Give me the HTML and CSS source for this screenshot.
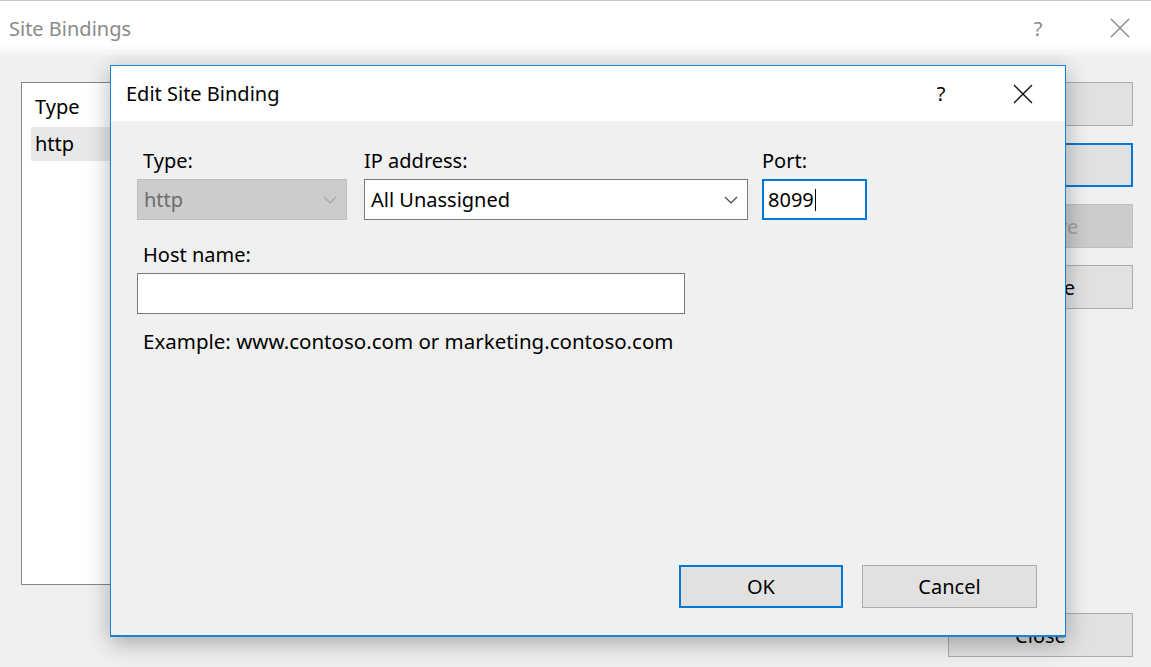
FILE: index.html
```html
<!doctype html>
<html>
<head>
    <title>Site Bindings</title>
    <meta charset="utf-8"/>
    <link rel="stylesheet" href="styles.css">
</head>
<body>

    <div class="window">
        <div class="titlebar faded">
            <span class="title">Site Bindings</span>
            <span class="help">?</span>
            <span class="close">
                <svg width="20" height="20" viewBox="0 0 20 20"><path d="M1 1 L19 19 M19 1 L1 19" stroke="#888" stroke-width="1.4" fill="none"/></svg>
            </span>
        </div>
        <div class="winBody">
            <div class="listBox">
                <div class="listHead">Type</div>
                <div class="listRow">http</div>
            </div>
            <div class="sideButtons">
                <div class="btn">Add...</div>
                <div class="btn focused">Edit...</div>
                <div class="btn disabled">Remove</div>
                <div class="btn">Browse</div>
                <div class="btn closeBtn">Close</div>
            </div>
        </div>
    </div>

    <div class="dialog">
        <div class="titlebar">
            <span class="title">Edit Site Binding</span>
            <span class="help">?</span>
            <span class="close">
                <svg width="20" height="20" viewBox="0 0 20 20"><path d="M1 1 L19 19 M19 1 L1 19" stroke="#111" stroke-width="1.4" fill="none"/></svg>
            </span>
        </div>
        <div class="dlgBody">
            <div class="fieldRow">
                <div class="field typeField">
                    <label class="indent">Type:</label>
                    <div class="combo disabled">
                        <span>http</span>
                        <svg width="14" height="8" viewBox="0 0 14 8"><polyline points="1,1 7,7 13,1" stroke="#a6a6a6" stroke-width="1.2" fill="none"/></svg>
                    </div>
                </div>
                <div class="field ipField">
                    <label>IP address:</label>
                    <div class="combo">
                        <span>All Unassigned</span>
                        <svg width="14" height="8" viewBox="0 0 14 8"><polyline points="1,1 7,7 13,1" stroke="#444" stroke-width="1.2" fill="none"/></svg>
                    </div>
                </div>
                <div class="field portField">
                    <label>Port:</label>
                    <div class="textbox active">8099<span class="caret"></span></div>
                </div>
            </div>

            <div class="field hostField">
                <label class="indent">Host name:</label>
                <div class="textbox"></div>
            </div>
            <p class="hint">Example: www.contoso.com or marketing.contoso.com</p>

            <div class="dlgButtons">
                <div class="btn focused okBtn">OK</div>
                <div class="btn cancelBtn">Cancel</div>
            </div>
        </div>
    </div>

</body>
</html>
```

FILE: styles.css
```css
* {
    margin: 0;
    box-sizing: border-box;
    font-family: "Noto Sans", "Open Sans", sans-serif;
}

body {
    width: 1151px;
    height: 667px;
    overflow: hidden;
    position: relative;
    background-color: #f0f0f0;
    font-size: 20px;
    color: #000;
}

.window {
    height: 667px;
    border-top: 1px solid #c8c8c8;
}

.titlebar {
    height: 54px;
    background-color: #fff;
    display: flex;
    align-items: center;
    padding-left: 9px;
    font-size: 20px;
}

.titlebar .title {
    flex: 1;
}

.titlebar .help {
    width: 82px;
    text-align: center;
}

.titlebar .close {
    width: 82px;
    display: flex;
    justify-content: center;
    align-items: center;
}

.faded {
    color: #8a8a8a;
    background: linear-gradient(#fff 80%, #f4f4f4);
}

.faded .help {
    margin-right: 10px;
}

.faded .close {
    width: 62px;
}

.winBody {
    display: flex;
    padding: 27px 18px 0 21px;
    gap: 18px;
}

.listBox {
    flex: 1;
    height: 503px;
    background-color: #fff;
    border: 1px solid #828790;
    padding: 6px 9px;
}

.listHead {
    padding: 0 4px;
    height: 38px;
    line-height: 36px;
}

.listRow {
    background-color: #e8e8e8;
    padding: 0 4px;
    height: 34px;
    line-height: 34px;
}

.sideButtons {
    width: 185px;
    height: 575px;
    display: flex;
    flex-direction: column;
    gap: 17px;
}

.btn {
    height: 44px;
    background-color: #e1e1e1;
    border: 1px solid #adadad;
    display: flex;
    align-items: center;
    justify-content: center;
}

.btn.focused {
    border: 2px solid #0078d7;
}

.btn.disabled {
    background-color: #cccccc;
    border-color: #bfbfbf;
    color: #a0a0a0;
}

.closeBtn {
    margin-top: auto;
}

.dialog {
    position: absolute;
    left: 110px;
    top: 65px;
    width: 956px;
    height: 572px;
    background-color: #f0f0f0;
    border: 1px solid #1883d7;
    border-bottom-width: 2px;
    box-shadow: 0 6px 22px rgba(0, 0, 0, 0.3);
}

.dialog .titlebar {
    height: 55px;
    padding-left: 15px;
}

.dialog .help {
    margin-left: auto;
}

.dialog .close {
    margin-right: 1px;
}

.dlgBody {
    padding: 26px 26px 0 26px;
    height: 514px;
    position: relative;
    display: flex;
    flex-direction: column;
}

.fieldRow {
    display: flex;
}

.field label {
    display: block;
    height: 32px;
    line-height: 28px;
}

.field label.indent {
    padding-left: 6px;
}

.typeField {
    width: 210px;
    margin-right: 17px;
}

.ipField {
    width: 384px;
    margin-right: 14px;
}

.portField {
    width: 105px;
}

.combo {
    height: 41px;
    display: flex;
    align-items: center;
    justify-content: space-between;
    padding: 0 9px 0 6px;
    background-color: #fff;
    border: 1px solid #7a7a7a;
}

.combo.disabled {
    background-color: #cccccc;
    border-color: #bfbfbf;
    color: #6d6d6d;
}

.textbox {
    height: 41px;
    background-color: #fff;
    border: 1px solid #7a7a7a;
    padding: 0 5px;
    display: flex;
    align-items: center;
}

.textbox.active {
    border: 2px solid #0078d7;
    padding: 0 4px;
}

.caret {
    display: inline-block;
    width: 1px;
    height: 22px;
    background-color: #000;
    margin-left: 1px;
}

.hostField {
    width: 548px;
    margin-top: 21px;
}

.hint {
    margin-top: 13px;
    padding-left: 6px;
    font-size: 20.5px;
}

.dlgButtons {
    margin-top: auto;
    margin-bottom: 27px;
    display: flex;
    justify-content: flex-end;
    gap: 19px;
    padding-right: 2px;
}

.okBtn {
    width: 164px;
    height: 43px;
}

.cancelBtn {
    width: 175px;
    height: 43px;
}
```
